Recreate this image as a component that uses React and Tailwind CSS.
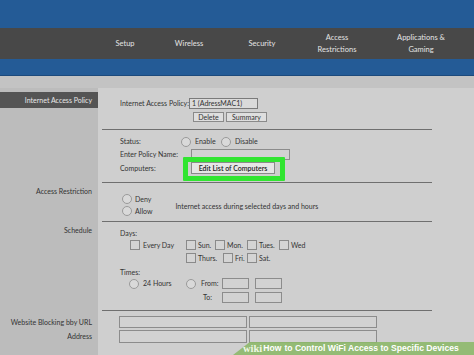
import React from 'react';

const font = { fontFamily: 'Lato, "Open Sans", sans-serif' };

function Radio() {
  return <span className="inline-block w-[10px] h-[10px] rounded-full border border-[#9a9a9a] bg-[#d9d9d9] shrink-0" />;
}

function Check() {
  return <span className="inline-block w-[10px] h-[10px] border border-[#8a8a8a] bg-[#d4d4d4] shrink-0" />;
}

function Box({ className }) {
  return <span className={'inline-block border border-[#8c8c8c] bg-[#d2d2d2] ' + className} />;
}

function Divider() {
  return <div className="ml-[4px] w-[330px] h-[1px] bg-[#6f6f6f]" />;
}

const navItems = [
  { w: 'w-[60px]', lines: ['Setup'] },
  { w: 'w-[68px]', lines: ['Wireless'] },
  { w: 'w-[78px]', lines: ['Security'] },
  { w: 'w-[72px]', lines: ['Access', 'Restrictions'] },
  { w: 'w-[96px]', lines: ['Applications &', 'Gaming'] },
];

export default function App() {
  return (
    <div className="relative w-[474px] h-[355px] overflow-hidden bg-[#cfcfcf] text-[7px] text-[#333]" style={font}>
      {/* header */}
      <div className="h-[28px] bg-[#245b96]" />
      <div className="h-[31px] bg-[#484848] flex items-center pl-[95px] text-[#e4e4e4] text-[7.5px] leading-[12px]">
        {navItems.map((n) => (
          <div key={n.lines[0]} className={n.w + ' text-center'}>
            {n.lines.map((l) => (
              <div key={l}>{l}</div>
            ))}
          </div>
        ))}
      </div>
      <div className="h-[17px] bg-[#245b96] border-b border-[#1c4a7c]" />
      <div className="h-[12px] bg-[#c3c3c3]" />

      <div className="grid grid-cols-[98px_1fr]">
        {/* Internet Access Policy */}
        <div className="bg-[#bcbcbc] pt-[4px]">
          <div className="h-[16px] bg-[#545454] text-[#e8e8e8] flex items-center justify-end pr-[6px]">Internet Access Policy</div>
        </div>
        <div className="h-[41px] pl-[22px] pt-[10px]">
          <div className="flex items-center h-[11px]">
            <span className="w-[69px]">Internet Access Policy:</span>
            <span className="w-[69px] h-[11px] border border-[#7a7a7a] bg-[#dadada] flex items-center pl-[2px]">1 (AdressMAC1)</span>
          </div>
          <div className="flex gap-[2px] ml-[73px] mt-[3px]">
            <span className="w-[31px] h-[10px] border border-[#8a8a8a] bg-[#dedede] flex items-center justify-center">Delete</span>
            <span className="w-[41px] h-[10px] border border-[#8a8a8a] bg-[#dedede] flex items-center justify-center">Summary</span>
          </div>
        </div>

        {/* status */}
        <div className="bg-[#bcbcbc]" />
        <div>
          <Divider />
          <div className="h-[52px] pl-[22px] pt-[6px]">
            <div className="flex items-center h-[11px]">
              <span className="w-[61px]">Status:</span>
              <Radio />
              <span className="ml-[4px] w-[26px]">Enable</span>
              <Radio />
              <span className="ml-[4px]">Disable</span>
            </div>
            <div className="flex items-center h-[11px] mt-[2px]">
              <span className="w-[71px]">Enter Policy Name:</span>
              <Box className="w-[99px] h-[11px]" />
            </div>
            <div className="flex items-center h-[12px] mt-[2px]">
              <span className="w-[71px]">Computers:</span>
              <span className="relative">
                <span className="relative z-10 w-[84px] h-[12px] border border-[#8a8a8a] bg-[#e6e6e6] flex items-center justify-center text-[#222] font-semibold">Edit List of Computers</span>
                <span className="absolute -left-[8px] -top-[5px] -right-[10px] -bottom-[7px] border-[5px] border-[#31e531] rounded-[1px]" />
              </span>
            </div>
          </div>
        </div>

        {/* access restriction */}
        <div className="bg-[#bcbcbc] pt-[4px] pr-[6px] text-right">Access Restriction</div>
        <div>
          <Divider />
          <div className="h-[38px] pl-[24px] pt-[6px] flex items-center">
            <div className="flex flex-col gap-[2px]">
              <div className="flex items-center h-[10px]">
                <Radio />
                <span className="ml-[3px]">Deny</span>
              </div>
              <div className="flex items-center h-[10px]">
                <Radio />
                <span className="ml-[3px]">Allow</span>
              </div>
            </div>
            <span className="ml-[23px] mt-[2px]">Internet access during selected days and hours</span>
          </div>
        </div>

        {/* schedule */}
        <div className="bg-[#bcbcbc] pt-[4px] pr-[6px] text-right">Schedule</div>
        <div>
          <Divider />
          <div className="h-[88px] pl-[22px] pt-[6px]">
            <div className="h-[10px] flex items-center">Days:</div>
            <div className="h-[10px] mt-[2px] flex items-center ml-[10px]">
              <span className="w-[56px] flex items-center"><Check /><span className="ml-[3px]">Every Day</span></span>
              <span className="w-[29px] flex items-center"><Check /><span className="ml-[2px]">Sun.</span></span>
              <span className="w-[32px] flex items-center"><Check /><span className="ml-[2px]">Mon.</span></span>
              <span className="w-[32px] flex items-center"><Check /><span className="ml-[2px]">Tues.</span></span>
              <span className="flex items-center"><Check /><span className="ml-[2px]">Wed</span></span>
            </div>
            <div className="h-[10px] mt-[3px] flex items-center ml-[66px]">
              <span className="w-[37px] flex items-center"><Check /><span className="ml-[2px]">Thurs.</span></span>
              <span className="w-[24px] flex items-center"><Check /><span className="ml-[2px]">Fri.</span></span>
              <span className="flex items-center"><Check /><span className="ml-[2px]">Sat.</span></span>
            </div>
            <div className="h-[10px] mt-[4px] flex items-center">Times:</div>
            <div className="h-[11px] mt-[1px] flex items-center ml-[9px]">
              <span className="w-[57px] flex items-center"><Radio /><span className="ml-[4px]">24 Hours</span></span>
              <Radio />
              <span className="ml-[5px] w-[21px]">From:</span>
              <Box className="w-[27px] h-[11px]" />
              <Box className="w-[27px] h-[11px] ml-[6px]" />
            </div>
            <div className="h-[11px] mt-[3px] flex items-center ml-[81px]">
              <span className="w-[21px] pl-[2px]">To:</span>
              <Box className="w-[27px] h-[11px]" />
              <Box className="w-[27px] h-[11px] ml-[6px]" />
            </div>
          </div>
        </div>

        {/* url blocking */}
        <div className="bg-[#bcbcbc] pt-[5px] pr-[6px] text-right leading-[14px] h-[45px]">
          <div>Website Blocking bby URL</div>
          <div>Address</div>
        </div>
        <div>
          <Divider />
          <div className="pl-[21px] pt-[5px] flex flex-col gap-[2px]">
            <div className="flex gap-[2px]">
              <Box className="w-[128px] h-[12px]" />
              <Box className="w-[128px] h-[12px]" />
            </div>
            <div className="flex gap-[2px]">
              <Box className="w-[128px] h-[13px]" />
              <Box className="w-[128px] h-[13px]" />
            </div>
          </div>
        </div>
      </div>

      {/* watermark */}
      <div className="absolute right-0 bottom-0 w-[241px] h-[13px] bg-[#8db86a]/90 [clip-path:polygon(7%_0,100%_0,100%_100%,0_100%)] flex items-center pl-[10px] text-white font-bold text-[8.6px] whitespace-nowrap" style={{ fontFamily: '"Liberation Sans", Arial, sans-serif' }}>
        <span className="text-[#eef7e4] text-[10.5px] mr-[1px]" style={{ fontFamily: '"Liberation Serif", serif' }}>wiki</span>
        <span>How</span>
        <span className="ml-[3px]">to Control WiFi Access to Specific Devices</span>
      </div>
    </div>
  );
}
